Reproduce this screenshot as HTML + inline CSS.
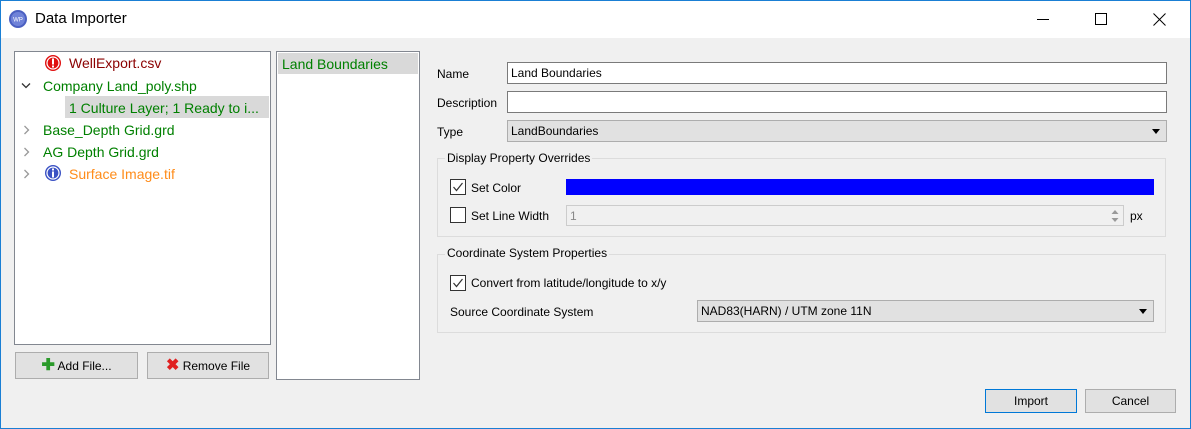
<!DOCTYPE html>
<html><head><style>
*{box-sizing:border-box;margin:0;padding:0}
body{width:1191px;height:429px;background:#f0f0f0;font-family:"Liberation Sans",sans-serif;font-size:12px;color:#000;position:relative;overflow:hidden}
.a{position:absolute}
.win{position:absolute;left:0;top:0;width:1191px;height:429px;border:1px solid #1a7fd4}
.tb{left:1px;top:1px;width:1189px;height:37px;background:#fff}
.box{background:#fff;border:1px solid #828790}
.inp{background:#fff;border:1px solid #7a7a7a}
.combo{background:#e1e1e1;border:1px solid #adadad;font-size:12px;padding:3px 0 0 3px}
.btn{background:#e1e1e1;border:1px solid #adadad;text-align:center;font-size:12px;line-height:23px}
.grp{border:1px solid #dcdcdc}
.gt{background:#f0f0f0;padding:0 2px;font-size:12px}
.cb{width:16px;height:16px;border:1px solid #333;background:#fff}
.t{font-size:14px;white-space:nowrap}
.arrow{position:absolute;right:6px;top:8px;width:0;height:0;border-left:4px solid transparent;border-right:4px solid transparent;border-top:5px solid #000}
</style></head><body>
<div class="win"></div>
<div class="a tb"></div>
<svg class="a" style="left:8px;top:9px" width="20" height="20" viewBox="0 0 20 20"><circle cx="10" cy="10" r="9" fill="#4a5fc1"/><circle cx="10" cy="10" r="7" fill="#6f82d8"/><text x="10" y="12.5" font-size="6" fill="#fff" text-anchor="middle" font-family="Liberation Sans">WP</text></svg>
<div class="a" style="left:35px;top:10px;font-size:15px">Data Importer</div>
<div class="a" style="left:1037px;top:19px;width:12px;height:1px;background:#000"></div>
<div class="a" style="left:1095px;top:13px;width:12px;height:12px;border:1px solid #000"></div>
<svg class="a" style="left:1153px;top:13px" width="13" height="13"><path d="M0.5 0.5L12.5 12.5M12.5 0.5L0.5 12.5" stroke="#000" stroke-width="1"/></svg>

<div class="a box" style="left:14px;top:51px;width:257px;height:294px"></div>
<svg class="a" style="left:44px;top:54px" width="18" height="18"><circle cx="9" cy="9" r="8" fill="#e01010"/><circle cx="9" cy="9" r="6" fill="none" stroke="#fff" stroke-width="1.2"/><rect x="8" y="4.5" width="2" height="6" fill="#fff"/><rect x="8" y="11.5" width="2" height="2" fill="#fff"/></svg>
<div class="a t" style="left:69px;top:55px;color:#8b0000">WellExport.csv</div>
<svg class="a" style="left:21px;top:82px" width="10" height="8"><path d="M1 1.5L5 5.5L9 1.5" stroke="#333" stroke-width="1.3" fill="none"/></svg>
<div class="a t" style="left:43px;top:78px;color:#008000">Company Land_poly.shp</div>
<div class="a" style="left:65px;top:96px;width:204px;height:22px;background:#d9d9d9"></div>
<div class="a t" style="left:69px;top:100px;color:#008000">1 Culture Layer; 1 Ready to i...</div>
<svg class="a" style="left:23px;top:125px" width="8" height="10"><path d="M1.5 1L5.5 5L1.5 9" stroke="#999" stroke-width="1.3" fill="none"/></svg>
<div class="a t" style="left:43px;top:122px;color:#008000">Base_Depth Grid.grd</div>
<svg class="a" style="left:23px;top:147px" width="8" height="10"><path d="M1.5 1L5.5 5L1.5 9" stroke="#999" stroke-width="1.3" fill="none"/></svg>
<div class="a t" style="left:43px;top:144px;color:#008000">AG Depth Grid.grd</div>
<svg class="a" style="left:23px;top:169px" width="8" height="10"><path d="M1.5 1L5.5 5L1.5 9" stroke="#999" stroke-width="1.3" fill="none"/></svg>
<svg class="a" style="left:44px;top:164px" width="18" height="18"><circle cx="9" cy="9" r="8" fill="#3b52c4"/><circle cx="9" cy="9" r="6" fill="none" stroke="#fff" stroke-width="1.2"/><rect x="8" y="4.5" width="2" height="2" fill="#fff"/><rect x="8" y="7.5" width="2" height="6" fill="#fff"/></svg>
<div class="a t" style="left:69px;top:166px;color:#ff8c1a">Surface Image.tif</div>

<div class="a btn" style="left:15px;top:352px;width:123px;height:27px;line-height:25px"><span style="color:#2a9a2a;font-weight:bold;font-size:16px">✚</span> Add File...</div>
<div class="a btn" style="left:147px;top:352px;width:122px;height:27px;line-height:25px"><span style="color:#e02020;font-weight:bold;font-size:16px">✖</span> Remove File</div>

<div class="a box" style="left:276px;top:51px;width:144px;height:329px"></div>
<div class="a" style="left:278px;top:53px;width:140px;height:21px;background:#d9d9d9"></div>
<div class="a t" style="left:282px;top:56px;color:#008000">Land Boundaries</div>

<div class="a" style="left:437px;top:67px">Name</div>
<div class="a inp" style="left:507px;top:62px;width:660px;height:22px;padding:3px 0 0 3px">Land Boundaries</div>
<div class="a" style="left:437px;top:96px">Description</div>
<div class="a inp" style="left:507px;top:91px;width:660px;height:22px"></div>
<div class="a" style="left:437px;top:125px">Type</div>
<div class="a combo" style="left:507px;top:120px;width:660px;height:22px">LandBoundaries<div class="arrow"></div></div>

<div class="a grp" style="left:437px;top:158px;width:729px;height:79px"></div>
<div class="a gt" style="left:445px;top:151px">Display Property Overrides</div>
<div class="a cb" style="left:450px;top:179px"></div>
<svg class="a" style="left:452px;top:181px" width="12" height="12"><path d="M1.5 6L4.5 9.5L10.5 2" stroke="#333" stroke-width="1.2" fill="none"/></svg>
<div class="a" style="left:471px;top:181px">Set Color</div>
<div class="a" style="left:566px;top:179px;width:588px;height:16px;background:#0000ff"></div>
<div class="a cb" style="left:450px;top:207px"></div>
<div class="a" style="left:471px;top:209px">Set Line Width</div>
<div class="a" style="left:566px;top:205px;width:558px;height:21px;border:1px solid #ccc;background:#f0f0f0;color:#888;padding:3px 0 0 3px">1</div>
<svg class="a" style="left:1110px;top:208px" width="10" height="16"><path d="M1.5 6L5 2L8.5 6Z" fill="#999"/><path d="M1.5 10L5 14L8.5 10Z" fill="#999"/></svg>
<div class="a" style="left:1130px;top:209px">px</div>

<div class="a grp" style="left:437px;top:254px;width:729px;height:79px"></div>
<div class="a gt" style="left:445px;top:246px">Coordinate System Properties</div>
<div class="a cb" style="left:450px;top:275px"></div>
<svg class="a" style="left:452px;top:277px" width="12" height="12"><path d="M1.5 6L4.5 9.5L10.5 2" stroke="#333" stroke-width="1.2" fill="none"/></svg>
<div class="a" style="left:471px;top:276px">Convert from latitude/longitude to x/y</div>
<div class="a" style="left:450px;top:305px">Source Coordinate System</div>
<div class="a combo" style="left:697px;top:300px;width:457px;height:22px">NAD83(HARN) / UTM zone 11N<div class="arrow"></div></div>

<div class="a btn" style="left:985px;top:389px;width:92px;height:24px;border:1px solid #0078d7;line-height:22px">Import</div>
<div class="a btn" style="left:1085px;top:389px;width:91px;height:24px;line-height:22px">Cancel</div>
</body></html>
